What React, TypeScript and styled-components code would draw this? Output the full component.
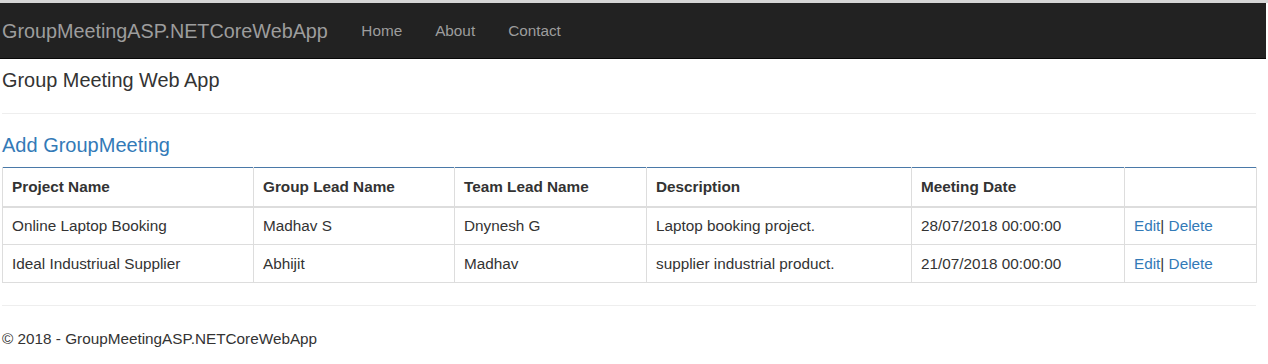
import React from 'react';
import styled, { createGlobalStyle } from 'styled-components';

const GlobalStyle = createGlobalStyle`
  html, body {
    margin: 0;
    padding: 0;
    background: #fff;
  }
  body {
    font-family: "Liberation Sans", Arial, Helvetica, sans-serif;
    font-size: 15.3px;
    line-height: 20px;
    color: #333;
  }
  * {
    box-sizing: border-box;
  }
`;

const meetings = [
  {
    project: 'Online Laptop Booking',
    groupLead: 'Madhav S',
    teamLead: 'Dnynesh G',
    description: 'Laptop booking project.',
    date: '28/07/2018 00:00:00',
  },
  {
    project: 'Ideal Industriual Supplier',
    groupLead: 'Abhijit',
    teamLead: 'Madhav',
    description: 'supplier industrial product.',
    date: '21/07/2018 00:00:00',
  },
];

const columns = [
  { title: 'Project Name', width: 251 },
  { title: 'Group Lead Name', width: 201 },
  { title: 'Team Lead Name', width: 192 },
  { title: 'Description', width: 265 },
  { title: 'Meeting Date', width: 213 },
  { title: '', width: 132 },
];

const App = () => {
  return (
    <Page>
      <GlobalStyle />
      <Navbar>
        <Brand href='#'>GroupMeetingASP.NETCoreWebApp</Brand>
        <NavList>
          <NavItem href='#'>Home</NavItem>
          <NavItem href='#'>About</NavItem>
          <NavItem href='#'>Contact</NavItem>
        </NavList>
      </Navbar>
      <Container>
        <Title>Group Meeting Web App</Title>
        <Rule />
        <AddLink href='#'>Add GroupMeeting</AddLink>
        <Table>
          <colgroup>
            {columns.map((c, i) => (
              <col key={i} style={{ width: c.width }} />
            ))}
          </colgroup>
          <thead>
            <tr>
              {columns.map((c, i) => (
                <Th key={i}>{c.title}</Th>
              ))}
            </tr>
          </thead>
          <tbody>
            {meetings.map((m, i) => (
              <tr key={i}>
                <Td>{m.project}</Td>
                <Td>{m.groupLead}</Td>
                <Td>{m.teamLead}</Td>
                <Td>{m.description}</Td>
                <Td>{m.date}</Td>
                <Td>
                  <ActionLink href='#'>Edit</ActionLink>|{' '}
                  <ActionLink href='#'>Delete</ActionLink>
                </Td>
              </tr>
            ))}
          </tbody>
        </Table>
        <FooterRule />
        <Footer>© 2018 - GroupMeetingASP.NETCoreWebApp</Footer>
      </Container>
    </Page>
  );
};

export default App;

const Page = styled.div`
  border-top: 3px solid #d6d6d6;
  min-height: 364px;
`;

const Navbar = styled.nav`
  display: flex;
  align-items: center;
  height: 56px;
  margin-right: 2px;
  background-color: #222;
  border-bottom: 1px solid #080808;
`;

const Brand = styled.a`
  font-size: 19.8px;
  line-height: 20px;
  color: #9d9d9d;
  text-decoration: none;
  padding: 0 17px 0 2px;
`;

const NavList = styled.div`
  display: flex;
`;

const NavItem = styled.a`
  font-size: 15.3px;
  line-height: 20px;
  color: #9d9d9d;
  text-decoration: none;
  padding: 0 16.5px;
`;

const Container = styled.div`
  width: 1256px;
  padding-left: 2px;
`;

const Title = styled.h3`
  margin: 8px 0 0;
  font-size: 19.9px;
  font-weight: 400;
  line-height: 26px;
  color: #333;
`;

const Rule = styled.hr`
  margin: 20px 0 0;
  border: 0;
  border-top: 1px solid #eee;
`;

const AddLink = styled.a`
  display: block;
  margin-top: 18px;
  font-size: 20px;
  line-height: 26px;
  color: #337ab7;
  text-decoration: none;
`;

const Table = styled.table`
  width: 100%;
  margin-top: 9px;
  border-collapse: collapse;
  table-layout: fixed;
  border: 1px solid #ddd;
  border-top: 1px solid #4a79a8;
`;

const Th = styled.th`
  padding: 9px 9px 8px;
  height: 39px;
  text-align: left;
  font-weight: 700;
  color: #333;
  border-left: 1px solid #ddd;
  border-right: 1px solid #ddd;
  border-bottom: 2px solid #ddd;
`;

const Td = styled.td`
  padding: 8px 9px;
  height: 38px;
  color: #333;
  border: 1px solid #ddd;
`;

const ActionLink = styled.a`
  color: #337ab7;
  text-decoration: none;
`;

const FooterRule = styled.hr`
  margin: 22px 0 0;
  border: 0;
  border-top: 1px solid #eee;
`;

const Footer = styled.p`
  margin: 23px 0 0;
  font-size: 15.3px;
  line-height: 20px;
`;
